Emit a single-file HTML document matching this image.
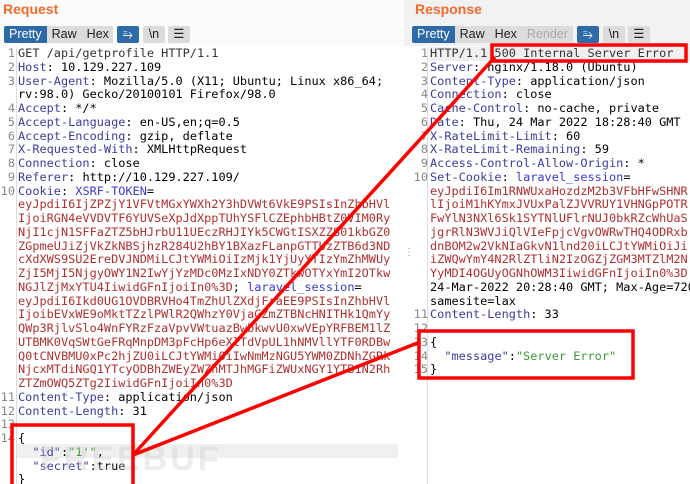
<!DOCTYPE html>
<html><head><meta charset="utf-8"><style>
*{margin:0;padding:0;box-sizing:border-box}
body{width:690px;height:484px;overflow:hidden;background:#fff;position:relative;font-family:"Liberation Sans",sans-serif}
.hdr{position:absolute;top:0;height:46px}
.title{position:absolute;top:1px;font-weight:bold;font-size:14px;color:#f26a2e}
.btns{position:absolute;top:26px;height:17px;display:flex;font-size:12.5px}
.b{height:17px;line-height:17px;padding:0 5px;background:#dcdcdc;color:#222}
.b.on{background:#2e6aa8;color:#fff;border-radius:2px 0 0 2px}
.ic{margin-left:4px;width:22px;border-radius:2px;text-align:center}
.ic.blue{background:#2e6aa8;color:#fff}
.code{position:absolute;top:47px;font-family:"DejaVu Sans Mono","Liberation Mono",monospace;font-size:11.9px;line-height:13.75px;white-space:pre;overflow:hidden}
.ln{position:absolute;color:#888;text-align:right}
.k{color:#3c3c9e}.v{color:#333}.r{color:#b03030}.g{color:#3a9a3a}.o{color:#333}
</style></head><body>
<div class="hdr" style="left:0;width:404px;background:#fbfbfb"></div>
<div class="hdr" style="left:404px;width:286px;background:#f2f2f2"></div>
<div class="title" style="left:3px">Request</div>
<div class="title" style="left:415px">Response</div>
<div class="btns" style="left:4px"><span class="b on">Pretty</span><span class="b">Raw</span><span class="b" style="padding-right:4px">Hex</span><span class="b ic blue">⥱</span><span class="b ic">\n</span><span class="b ic" style="margin-left:3px">☰</span></div>
<div class="btns" style="left:412px"><span class="b on">Pretty</span><span class="b">Raw</span><span class="b">Hex</span><span class="b" style="color:#aaa">Render</span><span class="b ic blue">⥱</span><span class="b ic">\n</span><span class="b ic" style="margin-left:3px">☰</span></div>

<div style="position:absolute;left:16px;top:444px;width:382px;height:14px;background:#f0f0f0"></div>
<div style="position:absolute;left:429px;top:47px;width:261px;height:14px;background:#efefef"></div>
<div style="position:absolute;left:427px;top:47px;width:1px;height:437px;background:#ddd"></div>
<div style="position:absolute;left:16px;top:47px;width:1px;height:437px;background:#ddd"></div>
<div style="position:absolute;left:404px;top:247px;color:#999;font-size:10px">⋮</div>

<div class="code ln" style="left:0;width:15px;height:437px">1
2
3

4
5
6
7
8
9
10














11
12
13
14


</div>
<div class="code" style="left:18px;width:384px;height:437px"><span class="o">GET /api/getprofile HTTP/1.1</span>
<span class="k">Host</span>: 10.129.227.109
<span class="k">User-Agent</span>: Mozilla/5.0 (X11; Ubuntu; Linux x86_64;
rv:98.0) Gecko/20100101 Firefox/98.0
<span class="k">Accept</span>: */*
<span class="k">Accept-Language</span>: en-US,en;q=0.5
<span class="k">Accept-Encoding</span>: gzip, deflate
<span class="k">X-Requested-With</span>: XMLHttpRequest
<span class="k">Connection</span>: close
<span class="k">Referer</span>: http://10.129.227.109/
<span class="k">Cookie</span>: <span style="color:#3a3ad0">XSRF-TOKEN</span>=
<span class="r">eyJpdiI6IjZPZjY1VFVtMGxYWXh2Y3hDVWt6VkE9PSIsInZhbHVl
IjoiRGN4eVVDVTF6YUVSeXpJdXppTUhYSFlCZEphbHBtZ0VIM0Ry
NjI1cjN1SFFaZTZ5bHJrbU11UEczRHJIYk5CWGtISXZZS01kbGZ0
ZGpmeUJiZjVkZkNBSjhzR284U2hBY1BXazFLanpGTTUzZTB6d3ND
cXdXWS9SU2EreDVJNDMiLCJtYWMiOiIzMjk1YjUyYTIzYmZhMWUy
ZjI5MjI5NjgyOWY1N2IwYjYzMDc0MzIxNDY0ZTkwOTYxYmI2OTkw
NGJlZjMxYTU4IiwidGFnIjoiIn0%3D</span>; <span style="color:#3a3ad0">laravel_session</span>=
<span class="r">eyJpdiI6Ikd0UG1OVDBRVHo4TmZhUlZXdjFraEE9PSIsInZhbHVl
IjoibEVxWE9oMktTZzlPWlR2QWhzY0VjaGZmZTBNcHNITHk1QmYy
QWp3RjlvSlo4WnFYRzFzaVpvVWtuazBwbkwvU0xwVEpYRFBEM1lZ
UTBMK0VqSWtGeFRqMnpDM3pFcHp6eXlTdVpUL1hNMVllYTF0RDBw
Q0tCNVBMU0xPc2hjZU0iLCJtYWMiOiIwNmMzNGU5YWM0ZDNhZGRk
NjcxMTdiNGQ1YTcyODBhZWEyZWZhMTJhMGFiZWUxNGY1YTB1N2Rh
ZTZmOWQ5ZTg2IiwidGFnIjoiIn0%3D</span>
<span class="k">Content-Type</span>: application/json
<span class="k">Content-Length</span>: 31

{
  <span class="k">"id"</span>:<span class="g">"1'"</span>,
  <span class="k">"secret"</span>:true
}</div>

<div class="code ln" style="left:408px;width:20px;height:437px">1
2
3
4
5
6
7
8
9
10









11
12
13
14
15</div>
<div class="code" style="left:430px;width:260px;height:437px"><span class="o">HTTP/1.1 500 Internal Server Error</span>
<span class="k">Server</span>: nginx/1.18.0 (Ubuntu)
<span class="k">Content-Type</span>: application/json
<span class="k">Connection</span>: close
<span class="k">Cache-Control</span>: no-cache, private
<span class="k">Date</span>: Thu, 24 Mar 2022 18:28:40 GMT
<span class="k">X-RateLimit-Limit</span>: 60
<span class="k">X-RateLimit-Remaining</span>: 59
<span class="k">Access-Control-Allow-Origin</span>: *
<span class="k">Set-Cookie</span>: <span style="color:#3a3ad0">laravel_session</span>=
<span class="r">eyJpdiI6Im1RNWUxaHozdzM2b3VFbHFwSHNR
lIjoiM1hKYmxJVUxPalZJVVRUY1VHNGpPOTR
FwYlN3NXl6Sk1SYTNlUFlrNUJ0bkRZcWhUaS
jgrRlN3WVJiQlVIeFpjcVgvOWRwTHQ4ODRxb
dnBOM2w2VkNIaGkvN1lnd20iLCJtYWMiOiJi
iZWQwYmY4N2RlZTliN2IzOGZjZGM3MTZlM2N
YyMDI4OGUyOGNhOWM3IiwidGFnIjoiIn0%3D</span>
24-Mar-2022 20:28:40 GMT; Max-Age=7200
samesite=lax
<span class="k">Content-Length</span>: 33

{
  <span class="k">"message"</span>:<span class="g">"Server Error"</span>
}</div>

<div style="position:absolute;left:40px;top:440px;font:bold 34px 'Liberation Sans',sans-serif;color:rgba(200,200,200,0.35);letter-spacing:3px">FREEBUF</div>

<svg width="690" height="484" style="position:absolute;left:0;top:0" viewBox="0 0 690 484">
<g fill="none" stroke="#f00" stroke-width="3.5">
<rect x="12" y="425" width="121" height="62"/>
<rect x="492" y="45" width="194" height="16"/>
<rect x="419" y="331" width="214" height="47"/>
<line x1="133" y1="455" x2="495" y2="57"/>
<line x1="133" y1="455" x2="420" y2="342"/>
</g>
</svg>
</body></html>
